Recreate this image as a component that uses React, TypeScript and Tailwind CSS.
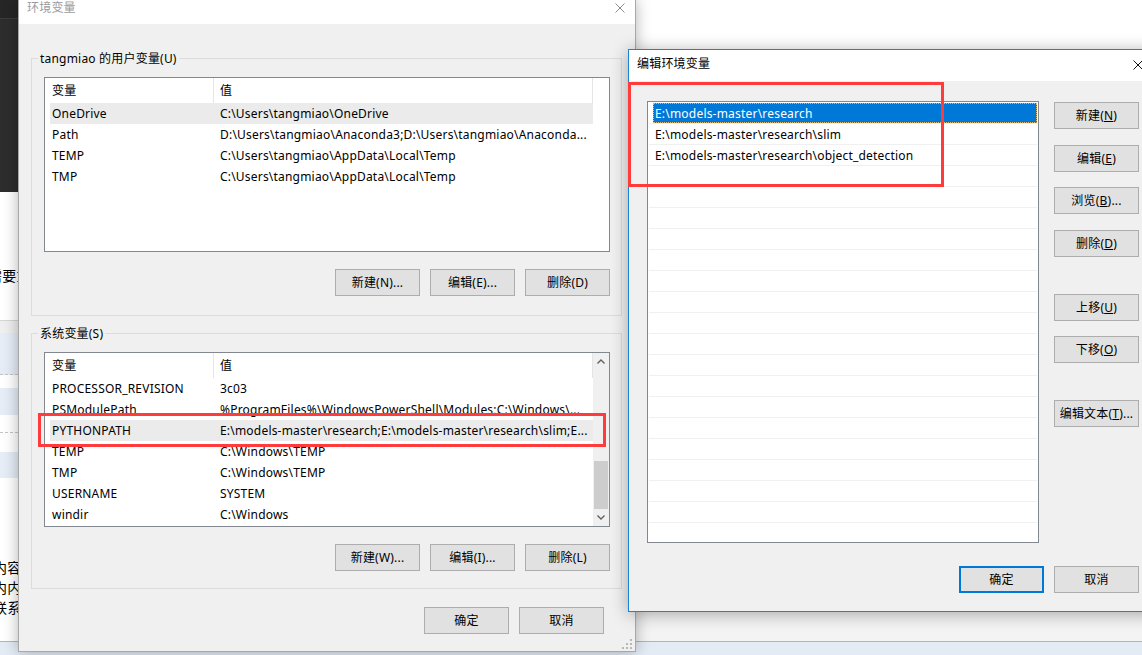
import React from "react";

type Row = [string, string];

const userRows: Row[] = [
  ["OneDrive", "C:\\Users\\tangmiao\\OneDrive"],
  ["Path", "D:\\Users\\tangmiao\\Anaconda3;D:\\Users\\tangmiao\\Anaconda..."],
  ["TEMP", "C:\\Users\\tangmiao\\AppData\\Local\\Temp"],
  ["TMP", "C:\\Users\\tangmiao\\AppData\\Local\\Temp"],
];

const sysRows: Row[] = [
  ["PROCESSOR_REVISION", "3c03"],
  ["PSModulePath", "%ProgramFiles%\\WindowsPowerShell\\Modules;C:\\Windows\\..."],
  ["PYTHONPATH", "E:\\models-master\\research;E:\\models-master\\research\\slim;E..."],
  ["TEMP", "C:\\Windows\\TEMP"],
  ["TMP", "C:\\Windows\\TEMP"],
  ["USERNAME", "SYSTEM"],
  ["windir", "C:\\Windows"],
];

const pathRows = [
  "E:\\models-master\\research",
  "E:\\models-master\\research\\slim",
  "E:\\models-master\\research\\object_detection",
];

function Btn({ children, focus = false }: { children: React.ReactNode; focus?: boolean }) {
  return (
    <div
      className={
        focus
          ? "flex h-[27px] w-[85px] shrink-0 items-center justify-center border-2 border-[#0078d7] bg-[#e1e1e1] text-[12px] text-black"
          : "flex h-[27px] w-[85px] shrink-0 items-center justify-center border border-[#adadad] bg-[#e1e1e1] text-[12px] text-black"
      }
    >
      <span className="whitespace-nowrap">{children}</span>
    </div>
  );
}

function CloseX({ color }: { color: string }) {
  return (
    <svg width="10" height="10" viewBox="0 0 10 10" className="shrink-0">
      <path d="M0.5 0.5 L9.5 9.5 M9.5 0.5 L0.5 9.5" stroke={color} strokeWidth="1" fill="none" />
    </svg>
  );
}

function Chevron({ up }: { up: boolean }) {
  return (
    <svg width="8" height="5" viewBox="0 0 8 5">
      <path
        d={up ? "M0.5 4.5 L4 1 L7.5 4.5" : "M0.5 0.5 L4 4 L7.5 0.5"}
        stroke="#606060"
        strokeWidth="1.4"
        fill="none"
      />
    </svg>
  );
}

function ListView({ rows, hl, height, scroll }: { rows: Row[]; hl: number; height: string; scroll: boolean }) {
  return (
    <div className={"flex w-[566px] shrink-0 overflow-hidden border border-[#828790] bg-white " + height}>
      <div className="flex w-[548px] flex-col">
        <div className="flex h-[25px] shrink-0">
          <div className="flex w-[169px] items-center border-r border-[#e5e5e5] pl-[7px]">变量</div>
          <div className="flex w-[379px] items-center border-r border-[#e5e5e5] pl-[6px]">值</div>
        </div>
        {rows.map((r, i) => (
          <div
            key={i}
            className={
              i === hl
                ? "ml-[5px] flex h-[21px] w-[543px] shrink-0 items-center bg-[#ebebeb]"
                : "ml-[5px] flex h-[21px] w-[543px] shrink-0 items-center"
            }
          >
            <div className="w-[164px] overflow-hidden whitespace-nowrap pl-[2px]">{r[0]}</div>
            <div className="flex-1 overflow-hidden whitespace-nowrap pl-[6px]">{r[1]}</div>
          </div>
        ))}
      </div>
      {scroll && (
        <div className="flex w-[16px] flex-col bg-[#f0f0f0]">
          <div className="flex h-[17px] shrink-0 items-center justify-center">
            <Chevron up={true} />
          </div>
          <div className="h-[91px] shrink-0" />
          <div className="mx-[1px] h-[48px] shrink-0 bg-[#cdcdcd]" />
          <div className="flex-1" />
          <div className="flex h-[17px] shrink-0 items-center justify-center">
            <Chevron up={false} />
          </div>
        </div>
      )}
    </div>
  );
}

function GroupBox({ label, height, children }: { label: string; height: string; children: React.ReactNode }) {
  return (
    <div className={"flex w-[591px] shrink-0 flex-col border border-[#dcdcdc] pl-[12px] pr-[11px] " + height}>
      <span className="-ml-[6px] -mt-[8px] h-[16px] self-start whitespace-nowrap bg-[#f0f0f0] px-[2px] leading-[16px]">
        {label}
      </span>
      {children}
    </div>
  );
}

function Grip() {
  return (
    <svg width="11" height="11" viewBox="0 0 11 11">
      <rect x="8" y="0" width="2" height="2" fill="#b8b8b8" />
      <rect x="8" y="4" width="2" height="2" fill="#b8b8b8" />
      <rect x="4" y="4" width="2" height="2" fill="#b8b8b8" />
      <rect x="8" y="8" width="2" height="2" fill="#b8b8b8" />
      <rect x="4" y="8" width="2" height="2" fill="#b8b8b8" />
      <rect x="0" y="8" width="2" height="2" fill="#b8b8b8" />
    </svg>
  );
}

function Background() {
  return (
    <div className="flex h-full w-full flex-col">
      <div className="flex flex-1">
        <div className="flex w-[18px] flex-col overflow-hidden bg-white text-[14px] text-black">
          <div className="h-[19px] shrink-0 border-b border-[#3c3c3c] bg-[#262626]" />
          <div className="h-[173px] shrink-0 bg-[#2d2d2d]" />
          <div className="h-[76px] shrink-0" />
          <div className="-ml-[12px] h-[16px] shrink-0 whitespace-nowrap leading-[16px]">需要重</div>
          <div className="h-[36px] shrink-0" />
          <div className="h-[13px] shrink-0 border-t border-[#d6d6d6] bg-[#efefef]" />
          <div className="h-[42px] shrink-0 border-b border-dashed border-[#c4c4c4] bg-[#e6edf7]" />
          <div className="h-[13px] shrink-0" />
          <div className="flex h-[45px] shrink-0 flex-col border-b border-dashed border-[#c4c4c4]">
            <div className="h-[27px] bg-[#e6edf7]" />
          </div>
          <div className="h-[19px] shrink-0" />
          <div className="h-[26px] shrink-0 bg-[#e6edf7]" />
          <div className="h-[80px] shrink-0" />
          <div className="-ml-[7px] h-[20px] shrink-0 whitespace-nowrap leading-[20px]">内容</div>
          <div className="-ml-[7px] h-[20px] shrink-0 whitespace-nowrap leading-[20px]">内内</div>
          <div className="-ml-[7px] h-[20px] shrink-0 whitespace-nowrap leading-[20px]">联系</div>
        </div>
        <div className="flex flex-1 flex-col">
          <div className="h-[612px] shrink-0 bg-white" />
          <div className="flex-1 bg-[#f3f3f3]" />
        </div>
      </div>
      <div className="h-[14px] shrink-0 border-t border-[#b4b4b4] bg-[#e3ebf5]" />
    </div>
  );
}

function EnvDialog() {
  return (
    <div className="absolute left-[18px] top-0 flex h-[652px] w-[618px] flex-col border-x border-b border-[#a8a8a8] bg-[#f0f0f0] shadow-[0_0_14px_rgba(0,0,0,0.3)]">
      <div className="flex h-[24px] shrink-0 items-start justify-between bg-white pl-[8px] pr-[10px]">
        <span className="text-[12px] leading-[16px] text-[#9b9b9b]">环境变量</span>
        <div className="mt-[3px]">
          <CloseX color="#8a8a8a" />
        </div>
      </div>
      <div className="flex flex-1 flex-col pl-[12px] pt-[34px]">
        <GroupBox label="tangmiao 的用户变量(U)" height="h-[258px]">
          <div className="mt-[10px]">
            <ListView rows={userRows} hl={0} height="h-[175px]" scroll={false} />
          </div>
          <div className="mt-[17px] flex justify-end gap-[10px]">
            <Btn>新建(N)...</Btn>
            <Btn>编辑(E)...</Btn>
            <Btn>删除(D)</Btn>
          </div>
        </GroupBox>
        <div className="mt-[17px]">
          <GroupBox label="系统变量(S)" height="h-[256px]">
            <div className="mt-[10px]">
              <ListView rows={sysRows} hl={2} height="h-[175px]" scroll={true} />
            </div>
            <div className="mt-[17px] flex justify-end gap-[10px]">
              <Btn>新建(W)...</Btn>
              <Btn>编辑(I)...</Btn>
              <Btn>删除(L)</Btn>
            </div>
          </GroupBox>
        </div>
        <div className="mt-[18px] flex w-[591px] justify-end gap-[10px] pr-[18px]">
          <Btn>确定</Btn>
          <Btn>取消</Btn>
        </div>
      </div>
      <div className="absolute bottom-[1px] right-[2px]">
        <Grip />
      </div>
    </div>
  );
}

function EditDialog() {
  return (
    <div className="absolute left-[628px] top-[49px] flex h-[563px] w-[530px] flex-col border border-[#1883d7] bg-[#f0f0f0] shadow-[0_2px_16px_rgba(0,0,0,0.32)]">
      <div className="flex h-[31px] shrink-0 items-start justify-between bg-white pl-[8px] pr-[14px]">
        <span className="mt-[6px] text-[12px] leading-[16px] text-black">编辑环境变量</span>
        <div className="mt-[10px]">
          <CloseX color="#111111" />
        </div>
      </div>
      <div className="flex flex-1 flex-col pl-[18px] pr-[18px] pt-[20px]">
        <div className="flex">
          <div className="flex h-[442px] w-[392px] shrink-0 flex-col overflow-hidden border border-[#828790] bg-white pt-[1px]">
            {Array.from({ length: 21 }).map((_, i) => (
              <div key={i} className="mx-[1px] flex h-[21px] shrink-0 border-b border-[#f0f0f0]">
                {i === 0 ? (
                  <div className="ml-[4px] flex flex-1 items-center border border-dotted border-[#d8b774] bg-[#0078d7] pl-[1px] pt-[1px] text-white">
                    {pathRows[0]}
                  </div>
                ) : (
                  <div className="flex flex-1 items-center whitespace-nowrap pl-[6px] pt-[1px]">{pathRows[i] ?? ""}</div>
                )}
              </div>
            ))}
          </div>
          <div className="ml-[15px] flex flex-col">
            <div className="mt-[1px]">
              <Btn>
                新建(<u>N</u>)
              </Btn>
            </div>
            <div className="mt-[16px]">
              <Btn>
                编辑(<u>E</u>)
              </Btn>
            </div>
            <div className="mt-[15px]">
              <Btn>
                浏览(<u>B</u>)...
              </Btn>
            </div>
            <div className="mt-[16px]">
              <Btn>
                删除(<u>D</u>)
              </Btn>
            </div>
            <div className="mt-[37px]">
              <Btn>
                上移(<u>U</u>)
              </Btn>
            </div>
            <div className="mt-[15px]">
              <Btn>
                下移(<u>O</u>)
              </Btn>
            </div>
            <div className="mt-[37px]">
              <Btn>
                编辑文本(<u>T</u>)...
              </Btn>
            </div>
          </div>
        </div>
        <div className="mt-[23px] flex justify-end gap-[10px]">
          <Btn focus={true}>确定</Btn>
          <Btn>取消</Btn>
        </div>
      </div>
    </div>
  );
}

export default function App() {
  return (
    <div className="relative h-[655px] w-[1142px] overflow-hidden bg-white font-['Noto_Sans','Noto_Sans_CJK_SC',sans-serif] text-[12px] tracking-[0.2px] text-black">
      <Background />
      <EnvDialog />
      <EditDialog />
      <div className="absolute left-[38px] top-[413px] h-[34px] w-[568px] border-[3px] border-[#ff3b3b]" />
      <div className="absolute left-[628px] top-[82px] h-[105px] w-[316px] border-[3px] border-[#ff3b3b]" />
    </div>
  );
}
